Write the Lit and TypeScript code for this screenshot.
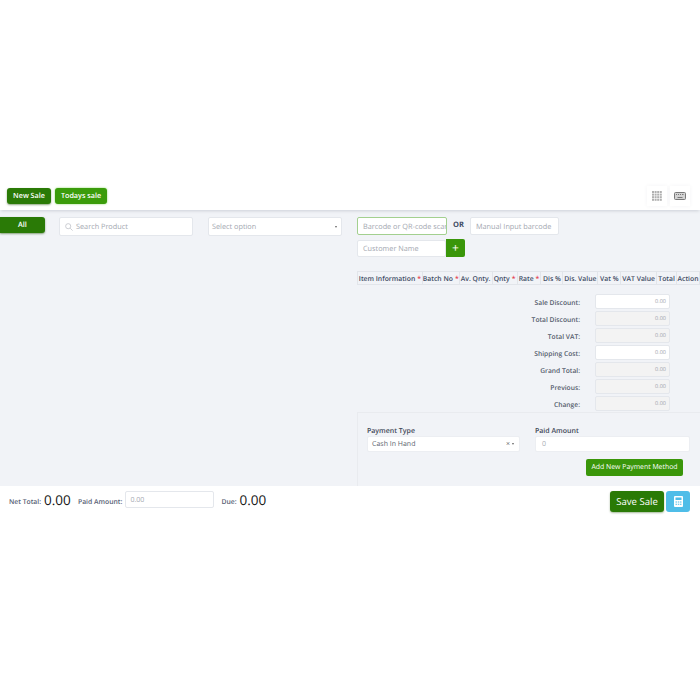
import { LitElement, html, css, svg } from "lit";
import { customElement } from "lit/decorators.js";

const cols: [string, number, boolean][] = [
  ["Item Information", 65, true],
  ["Batch No", 37, true],
  ["Av. Qnty.", 33, false],
  ["Qnty", 25, true],
  ["Rate", 24, true],
  ["Dis %", 22, false],
  ["Dis. Value", 35, false],
  ["Vat %", 23, false],
  ["VAT Value", 36, false],
  ["Total", 20, false],
  ["Action", 23, false],
];
const totals: [string, boolean][] = [
  ["Sale Discount:", true],
  ["Total Discount:", false],
  ["Total VAT:", false],
  ["Shipping Cost:", true],
  ["Grand Total:", false],
  ["Previous:", false],
  ["Change:", false],
];

@customElement("app-root")
export class AppRoot extends LitElement {
  static styles = css`
    :host { display: block; width: 700px; height: 700px; background: #fff; overflow: hidden;
      font-family: "Open Sans", "Noto Sans", sans-serif; color: #3f4756; text-rendering: geometricPrecision; }
    * { box-sizing: border-box; }
    .page { padding-top: 175px; }
    .top { height: 35px; background: #fff; display: flex; align-items: flex-start; padding: 13px 7px 0; gap: 4px;
      box-shadow: 0 2px 3px -1px rgba(60,70,90,.2); position: relative; z-index: 1; }
    .btn { border: 0; border-radius: 3px; color: #fff; font: 600 7.2px "Open Sans", sans-serif; text-rendering: geometricPrecision; display: flex; align-items: center; justify-content: center; padding: 0; }
    .new { width: 44px; height: 16px; background: #2a7a06; box-shadow: 0 1px 2px rgba(30,80,0,.5); }
    .today { width: 52px; height: 16px; background: #3b9c0b; box-shadow: 0 0 2px rgba(90,200,40,.8); }
    .tools { margin-left: auto; display: flex; gap: 3px; margin-top: -2px; margin-right: 3px; }
    .tool { width: 20px; height: 20px; background: #fff; display: flex; align-items: center; justify-content: center; box-shadow: 0 0 4px rgba(60,70,90,.06); }
    .main { height: 276px; background: #f1f3f7; display: flex; }
    .left { width: 357px; padding-top: 7px; display: flex; align-items: flex-start; }
    .all { width: 45px; height: 16px; background: #2a7a06; box-shadow: 0 1px 2px rgba(30,80,0,.5); border-radius: 0 3px 3px 0; margin-right: 14px; }
    .field { background: #fff; border: 1px solid #e4e7ec; border-radius: 2px; display: flex; align-items: center; font-size: 7.3px; color: #a3a7b0; white-space: nowrap; overflow: hidden; padding-top: 1px; }
    .search { width: 134px; height: 19px; padding-left: 5px; gap: 3px; margin-right: 15px; }
    .select { width: 134px; height: 19px; padding: 1px 4px 0 3px; justify-content: space-between; }
    .arrow { width: 0; height: 0; border: 1.5px solid transparent; border-top: 2px solid #666; border-bottom: 0; }
    .right { width: 343px; display: flex; flex-direction: column; padding-top: 7px; }
    .bar { display: flex; align-items: center; height: 18px; }
    .barcode { width: 90px; height: 18px; border-color: #a3d08f; padding-left: 5px; padding-right: 5px; }
    .or { width: 23px; text-align: center; font-size: 7.5px; font-weight: 700; color: #3d4a63; margin-top: -2px; }
    .manual { width: 89px; height: 18px; padding-left: 5px; }
    .cust { display: flex; margin-top: 4px; height: 18px; align-items: center; }
    .custin { width: 89px; height: 17px; padding-left: 5px; }
    .plus { width: 19px; height: 18px; background: #3a960a; color: #fff; font-size: 12px; display: flex; align-items: center; justify-content: center; line-height: 1; border-radius: 0 2px 2px 0; }
    .thead { display: flex; margin-top: 14px; height: 14px; border: 1px solid #e2e5ea; border-right: 0; background: #f1f3f7; }
    .th { font-size: 6.8px; font-weight: 600; color: #3d4a63; white-space: nowrap; display: flex; align-items: center; justify-content: center; border-right: 1px solid #e2e5ea; overflow: hidden; padding-top: 1px; }
    .req { color: #e5414f; margin-left: 2px; }
    .totals { margin-top: 8px; display: flex; flex-direction: column; gap: 1px; height: 119px; }
    .row { display: flex; align-items: center; justify-content: flex-end; height: 16px; padding-right: 30px; }
    .row label { font-size: 6.7px; font-weight: 600; color: #545c6c; margin-right: 15px; padding-top: 3px; }
    .num { width: 75px; height: 15px; border: 1px solid #e4e7ec; border-radius: 2px; font-size: 5.5px; color: #a0a4ac; display: flex; align-items: center; justify-content: flex-end; padding-right: 3px; background: #f3f3f3; }
    .num.on { background: #fff; }
    .pay { flex: 1; border-top: 1px solid #e9ebef; border-left: 1px solid #e9ebef; display: grid; grid-template-columns: 153px 155px; column-gap: 15px; padding: 12px 0 0 9px; align-content: start; }
    .pay label { font-size: 7px; font-weight: 600; color: #3f4756; display: block; line-height: 9px; padding-top: 2px; height: 11px; }
    .payf { height: 16px; padding: 0 5px 0 4px; justify-content: space-between; font-size: 7px; color: #5d6470; border-color: #eceef2; }
    .payf.amt { color: #a8acb3; padding-left: 6px; }
    .x { font-size: 7px; color: #555; display: flex; align-items: center; gap: 2px; }
    .addrow { grid-column: 1 / 3; display: flex; justify-content: flex-end; margin-top: 7px; padding-right: 7px; }
    .add { width: 97px; height: 17px; background: #3a960a; border-radius: 2px; font-weight: 500; font-size: 6.9px; }
    .foot { height: 40px; background: #fff; display: flex; align-items: flex-start; padding: 5px 0 0 9px; }
    .lab { font-size: 6.8px; font-weight: 600; color: #566074; white-space: nowrap; }
    .big { font-size: 13.5px; color: #111; margin-left: 3px; line-height: 1; }
    .f1 { display: flex; align-items: center; width: 69px; height: 20px; }
    .pa { width: 46.5px; height: 20px; display: flex; align-items: center; }
    .pin { width: 89px; height: 17px; padding-left: 5px; font-size: 7px; margin: 0 8px 0 0; }
    .due { display: flex; align-items: center; height: 20px; }
    .save { margin-left: auto; width: 54px; height: 21px; background: #2a7a06; font-size: 9.6px; font-weight: 500; margin-right: 2px; box-shadow: 0 1px 2px rgba(30,80,0,.4); }
    .calc { width: 24px; height: 21px; background: #4fbde8; border-radius: 3px; margin: 0 10px 0 0; display: flex; align-items: center; justify-content: center; }
  `;

  render() {
    return html`<div class="page">
      <div class="top">
        <button class="btn new">New Sale</button>
        <button class="btn today">Todays sale</button>
        <div class="tools">
          <div class="tool">
            <svg width="10" height="10" viewBox="0 0 10 10" fill="#b0b0b0">
              ${[0, 2.6, 5.2, 7.8].map((y) => [0, 2.6, 5.2, 7.8].map((x) => svg`<rect x=${x} y=${y} width="2" height="2"></rect>`))}
            </svg>
          </div>
          <div class="tool">
            <svg width="12" height="8" viewBox="0 0 12 8" fill="none" stroke="#7a7a7a" stroke-width="1">
              <rect x=".5" y=".5" width="11" height="7" rx="1" fill="#d4d4d4"></rect>
              <path d="M2 2.500h1M4 2.500h1M6 2.500h1M8 2.500h1.500M3.500 5.500h5"></path>
            </svg>
          </div>
        </div>
      </div>
      <div class="main">
        <div class="left">
          <button class="btn all">All</button>
          <div class="field search">
            <svg width="8" height="8" viewBox="0 0 10 10" fill="none" stroke="#c0c3c9" stroke-width="1"><circle cx="4" cy="4" r="3.200"></circle><path d="M6.500 6.500 9.500 9.500"></path></svg>
            Search Product
          </div>
          <div class="field select">Select option<span class="arrow"></span></div>
        </div>
        <div class="right">
          <div class="bar">
            <div class="field barcode">Barcode or QR-code scar</div>
            <div class="or">OR</div>
            <div class="field manual">Manual Input barcode</div>
          </div>
          <div class="cust">
            <div class="field custin">Customer Name</div>
            <div class="plus">+</div>
          </div>
          <div class="thead">
            ${cols.map(([t, w, r]) => html`<div class="th" style="width:${w}px">${t}${r ? html`<span class="req">*</span>` : ""}</div>`)}
          </div>
          <div class="totals">
            ${totals.map(([t, on]) => html`<div class="row"><label>${t}</label><div class="num ${on ? "on" : ""}">0.00</div></div>`)}
          </div>
          <div class="pay">
            <div>
              <label>Payment Type</label>
              <div class="field payf">Cash In Hand<span class="x">× <span class="arrow"></span></span></div>
            </div>
            <div>
              <label>Paid Amount</label>
              <div class="field payf amt">0</div>
            </div>
            <div class="addrow"><button class="btn add">Add New Payment Method</button></div>
          </div>
        </div>
      </div>
      <div class="foot">
        <div class="f1"><span class="lab">Net Total:</span><span class="big">0.00</span></div>
        <span class="lab pa">Paid Amount:</span>
        <div class="field pin">0.00</div>
        <div class="due"><span class="lab">Due:</span><span class="big">0.00</span></div>
        <button class="btn save">Save Sale</button>
        <div class="calc">
          <svg width="9" height="11" viewBox="0 0 9 11"><rect width="9" height="11" rx="1" fill="#fff"></rect><rect x="1.500" y="1.500" width="6" height="2.500" fill="#4fbde8"></rect><path d="M1.500 5.500h1.500v1h-1.500zM3.800 5.500h1.500v1h-1.500zM6 5.500h1.500v1h-1.500zM1.500 7.800h1.500v1h-1.500zM3.800 7.800h1.500v1h-1.500zM6 7.800h1.500v1h-1.500z" fill="#4fbde8"></path></svg>
        </div>
      </div>
    </div>`;
  }
}
